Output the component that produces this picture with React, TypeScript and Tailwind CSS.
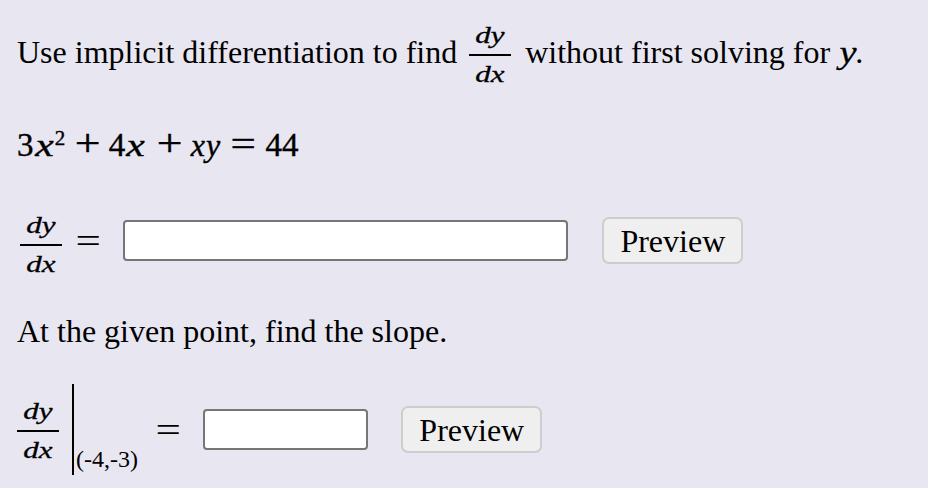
import React from "react";

const serif = { fontFamily: '"Liberation Serif", "Times New Roman", serif' };

function Frac({ className = "" }: { className?: string }) {
  return (
    <span className={"inline-flex w-[42px] flex-col items-center leading-none text-[23px] italic [-webkit-text-stroke:0.3px_black] " + className}>
      <span className="block h-[21px] scale-x-[1.35]">dy</span>
      <span className="mt-[9px] block h-[2px] w-full bg-black" />
      <span className="mt-[7px] block h-[21px] scale-x-[1.35]">dx</span>
    </span>
  );
}

function PreviewBtn({ className = "" }: { className?: string }) {
  return (
    <button
      className={
        "flex h-[47px] w-[141px] items-center justify-center rounded-[7px] border-2 border-[#cdcdcd] bg-[#efefef] text-[32px] text-black leading-none " +
        className
      }
      style={serif}
    >
      Preview
    </button>
  );
}

function Eq({ className = "" }: { className?: string }) {
  return (
    <span className={"inline-block scale-x-[1.25] text-[36px] leading-none " + className}>
      =
    </span>
  );
}

export default function App() {
  return (
    <div className="h-[488px] w-[928px] overflow-hidden bg-[#e8e6f1] text-black" style={serif}>
      <div className="flex items-center pl-[17px] pt-[20px] text-[32px] leading-none">
        <span>Use implicit differentiation to find</span>
        <Frac className="ml-[12px] mt-[4px]" />
        <span className="ml-[14px]">
          without first solving for{" "}
          <span className="ml-[3px] inline-block scale-x-[1.2] italic [-webkit-text-stroke:0.3px_black]">y</span>.
        </span>
      </div>

      <div className="mt-[40px] flex h-[36px] items-baseline pl-[17px] leading-none [-webkit-text-stroke:0.4px_black]">
        <span className="text-[33px]">3</span>
        <span className="inline-block scale-x-[1.3] pl-[3px] text-[32px] italic">x</span>
        <span className="relative -top-[11px] ml-[4px] text-[21px]">2</span>
        <span className="ml-[12px] inline-block scale-x-[1.2] text-[38px]">+</span>
        <span className="ml-[10px] text-[33px]">4</span>
        <span className="inline-block scale-x-[1.3] pl-[3px] text-[32px] italic">x</span>
        <span className="ml-[17px] inline-block scale-x-[1.2] text-[38px]">+</span>
        <span className="ml-[8px] inline-block pl-[2px] text-[32px] italic tracking-[1px]">xy</span>
        <span className="ml-[12px] inline-block scale-x-[1.25] text-[36px]">=</span>
        <span className="ml-[12px] text-[33px]">44</span>
      </div>

      <div className="mt-[48px] flex h-[65px] items-center pl-[20px]">
        <Frac className="mt-[6px]" />
        <Eq className="ml-[16px]" />
        <div className="ml-[25px] h-[41px] w-[445px] rounded-[4px] border-2 border-[#767676] bg-white" />
        <PreviewBtn className="ml-[34px]" />
      </div>

      <div className="mt-[42px] pl-[17px] text-[32px] leading-none">At the given point, find the slope.</div>

      <div className="mt-[37px] flex items-center pl-[17px]">
        <div className="flex h-[91px] items-center">
          <Frac className="w-[38px]" />
          <div className="ml-[13px] h-[91px] w-[2px] bg-black" />
          <div className="ml-[2px] self-end pb-[4px] text-[24px] leading-none">(-4,-3)</div>
        </div>
        <Eq className="ml-[20px]" />
        <div className="ml-[25px] h-[41px] w-[165px] shrink-0 rounded-[4px] border-2 border-[#767676] bg-white" />
        <PreviewBtn className="ml-[33px]" />
      </div>
    </div>
  );
}
